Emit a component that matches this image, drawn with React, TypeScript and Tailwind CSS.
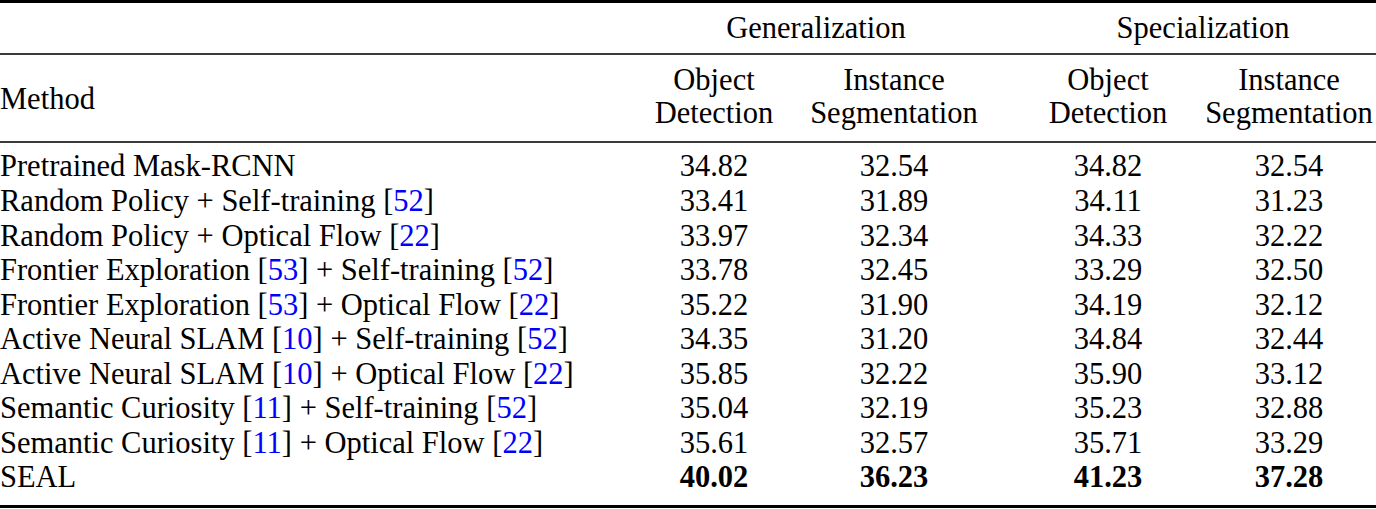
import React from "react"

type Part = string | { cite: string }

interface Row {
  method: Part[]
  vals: string[]
  bold?: boolean
}

const rows: Row[] = [
  { method: ["Pretrained Mask-RCNN"], vals: ["34.82", "32.54", "34.82", "32.54"] },
  { method: ["Random Policy + Self-training ", { cite: "52" }], vals: ["33.41", "31.89", "34.11", "31.23"] },
  { method: ["Random Policy + Optical Flow ", { cite: "22" }], vals: ["33.97", "32.34", "34.33", "32.22"] },
  { method: ["Frontier Exploration ", { cite: "53" }, " + Self-training ", { cite: "52" }], vals: ["33.78", "32.45", "33.29", "32.50"] },
  { method: ["Frontier Exploration ", { cite: "53" }, " + Optical Flow ", { cite: "22" }], vals: ["35.22", "31.90", "34.19", "32.12"] },
  { method: ["Active Neural SLAM ", { cite: "10" }, " + Self-training ", { cite: "52" }], vals: ["34.35", "31.20", "34.84", "32.44"] },
  { method: ["Active Neural SLAM ", { cite: "10" }, " + Optical Flow ", { cite: "22" }], vals: ["35.85", "32.22", "35.90", "33.12"] },
  { method: ["Semantic Curiosity ", { cite: "11" }, " + Self-training ", { cite: "52" }], vals: ["35.04", "32.19", "35.23", "32.88"] },
  { method: ["Semantic Curiosity ", { cite: "11" }, " + Optical Flow ", { cite: "22" }], vals: ["35.61", "32.57", "35.71", "33.29"] },
  { method: ["SEAL"], vals: ["40.02", "36.23", "41.23", "37.28"], bold: true },
]

const grid = "grid grid-cols-[636px_156px_204px_34px_156px_206px]"

function Method({ parts }: { parts: Part[] }) {
  return (
    <div className="whitespace-nowrap">
      {parts.map((p, i) =>
        typeof p === "string" ? (
          <span key={i}>{p}</span>
        ) : (
          <span key={i}>
            [<span className="text-[#0000ff]">{p.cite}</span>]
          </span>
        )
      )}
    </div>
  )
}

export default function App() {
  return (
    <div className="w-[1376px] h-[509px] overflow-hidden bg-white text-black font-['Liberation_Serif','Times_New_Roman',serif] text-[30.5px]">
      <div className="w-[1376px] border-t-[3px] border-b-[3px] border-black">
        {/* group headers */}
        <div className={`${grid} w-[1392px] pt-[7.5px] pb-[7.9px] leading-[34.6px]`}>
          <div />
          <div className="col-span-2 text-center">Generalization</div>
          <div />
          <div className="col-span-2 text-center pr-[16px]">Specialization</div>
        </div>
        <div className="h-[2px] bg-[#3a3a3a]" />

        {/* column headers */}
        <div className={`${grid} w-[1392px] pt-[9.5px] pb-[10.5px] leading-[33px]`}>
          <div className="flex items-center pt-[3px] leading-[34.6px]">Method</div>
          <div className="text-center">Object<br />Detection</div>
          <div className="text-center">Instance<br />Segmentation</div>
          <div />
          <div className="text-center">Object<br />Detection</div>
          <div className="text-center">Instance<br />Segmentation</div>
        </div>
        <div className="h-[2px] bg-[#3a3a3a]" />

        {/* body */}
        <div className="pt-[6.4px] pb-[10px] leading-[34.56px]">
          {rows.map((r, i) => (
            <div key={i} className={`${grid} w-[1392px]`}>
              <Method parts={r.method} />
              <div className={`text-center ${r.bold ? "font-bold" : ""}`}>{r.vals[0]}</div>
              <div className={`text-center ${r.bold ? "font-bold" : ""}`}>{r.vals[1]}</div>
              <div />
              <div className={`text-center ${r.bold ? "font-bold" : ""}`}>{r.vals[2]}</div>
              <div className={`text-center ${r.bold ? "font-bold" : ""}`}>{r.vals[3]}</div>
            </div>
          ))}
        </div>
      </div>
    </div>
  )
}
